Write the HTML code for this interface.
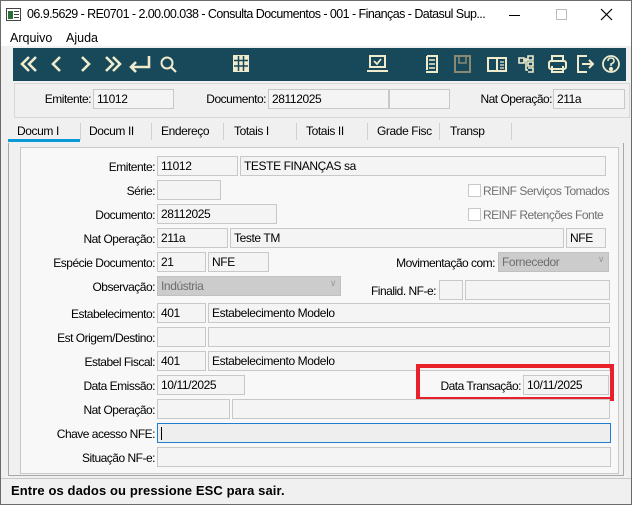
<!DOCTYPE html>
<html><head><meta charset="utf-8"><style>
*{margin:0;padding:0;box-sizing:border-box}
body{width:632px;height:505px;position:relative;background:#f0f0f0;font-family:"Liberation Sans",sans-serif;font-size:12px;color:#000;overflow:hidden}
.a{position:absolute}
.f{position:absolute;height:20px;border:1px solid #c8c8c8;background:#f4f4f4;padding:2px 0 0 3px;white-space:nowrap;letter-spacing:-0.4px}
.l{position:absolute;text-align:right;white-space:nowrap;letter-spacing:-0.5px}
.dis{background:#cccccc;color:#6d6d6d;border-color:#c0c0c0}
.t{position:absolute;top:124px;letter-spacing:-0.4px}
.sep{position:absolute;top:123px;width:1px;height:17px;background:#d0d0d0}
</style></head><body>
<div class="a" style="left:0;top:0;width:632px;height:505px;border:1px solid #6b6b6b;"></div>
<div class="a" style="left:1px;top:1px;width:630px;height:29px;background:#fff"></div>
<svg class="a" style="left:6px;top:8px" width="15" height="13"><rect x="0.5" y="0.5" width="14" height="12" fill="#fff" stroke="#444"/><rect x="2" y="3" width="5" height="8" fill="#2a6e3a"/><rect x="8" y="3" width="5" height="1" fill="#444"/><rect x="8" y="6" width="5" height="1" fill="#444"/><rect x="8" y="9" width="5" height="1" fill="#444"/></svg>
<div class="a" style="left:27px;top:7px;font-size:12.5px;letter-spacing:-0.55px;white-space:nowrap">06.9.5629 - RE0701 - 2.00.00.038 - Consulta Documentos - 001 - Finanças - Datasul Sup...</div>
<div class="a" style="left:509px;top:15px;width:11px;height:1px;background:#000"></div>
<div class="a" style="left:556px;top:9px;width:11px;height:11px;border:1px solid #bbb"></div>
<svg class="a" style="left:600px;top:8px" width="13" height="13"><path d="M1 1L12 12M12 1L1 12" stroke="#000" stroke-width="1.2"/></svg>
<div class="a" style="left:1px;top:30px;width:630px;height:16px;background:#fff"></div>
<div class="a" style="left:10px;top:31px;font-size:12.5px">Arquivo</div>
<div class="a" style="left:66px;top:31px;font-size:12.5px">Ajuda</div>
<div class="a" style="left:13px;top:48px;width:613px;height:33px;background:#17495a"></div>
<svg class="a" style="left:13px;top:48px" width="613" height="33" fill="none" stroke="#f0ebcc" stroke-width="2.6">
<path d="M16 9L9 16L16 23M23 9L16 16L23 23"/>
<path d="M47 9L40 16L47 23"/>
<path d="M69 9L76 16L69 23"/>
<path d="M93 9L100 16L93 23M100 9L107 16L100 23"/>
<path d="M136 8V19H118M123 14L118 19L123 24"/>
<circle cx="154" cy="15" r="5.5" stroke-width="2"/><path d="M158 19L163 24" stroke-width="2.2"/>
<g fill="#f0ebcc" stroke="none"><rect x="220" y="7" width="16" height="17"/></g>
<path d="M221 12.5H235M221 18H235M225.5 8V23M230.5 8V23" stroke="#17495a" stroke-width="1.5"/>
<rect x="357" y="8" width="15" height="11" stroke-width="2"/><path d="M354 23H375" stroke-width="2"/><path d="M361 13L364 16L368 11" stroke-width="1.8"/>
<path d="M414 8H424V24H413M414 8V22" stroke-width="2"/><path d="M416 12H422M416 16H422M416 20H422" stroke-width="1.5"/>
<rect x="442" y="8" width="15" height="16" stroke="#8a8a72" stroke-width="2"/><path d="M446 9V15H453V9" stroke="#8a8a72" stroke-width="1.6"/>
<path d="M475 10H484V23H475ZM484 10H493V23H484" stroke-width="2"/><path d="M487 14H491M487 17H491M487 20H491" stroke-width="1.3"/>
<path d="M506 10H511V15H506ZM515 8H520V12H515ZM515 14H520V18H515ZM515 20H520V24H515M511 12H515M513 10V22H515" stroke-width="1.6"/>
<rect x="536" y="13" width="17" height="8" rx="2" stroke-width="2"/><path d="M539 13V8H550V13M539 18V24H550V18" stroke-width="2"/>
<path d="M574 8H565V24H574M569 16H580M576 12L580 16L576 20" stroke-width="2"/>
<circle cx="598" cy="16" r="8" stroke-width="1.8"/><path d="M595 13Q595 10 598 10Q601 10 601 13Q601 15 598 16V18" stroke-width="1.6"/><circle cx="598" cy="21" r="0.8" fill="#f0ebcc"/>
</svg>
<div class="a" style="left:14px;top:83px;width:616px;height:35px;border:1px solid #d8d8d8"></div>
<div class="l" style="right:541px;top:92px">Emitente:</div><div class="f" style="left:93px;top:89px;width:81px">11012</div>
<div class="l" style="right:366px;top:92px">Documento:</div><div class="f" style="left:268px;top:89px;width:121px">28112025</div><div class="f" style="left:389px;top:89px;width:61px"></div>
<div class="l" style="right:80px;top:92px">Nat Operação:</div><div class="f" style="left:553px;top:89px;width:72px">211a</div>
<div class="t" style="left:17px">Docum I</div><div class="a" style="left:8px;top:139px;width:72px;height:3px;background:#0a9ad8"></div>
<div class="sep" style="left:80px"></div><div class="t" style="left:89px">Docum II</div>
<div class="sep" style="left:151px"></div><div class="t" style="left:161px">Endereço</div>
<div class="sep" style="left:223px"></div><div class="t" style="left:234px">Totais I</div>
<div class="sep" style="left:296px"></div><div class="t" style="left:306px">Totais II</div>
<div class="sep" style="left:367px"></div><div class="t" style="left:377px">Grade Fisc</div>
<div class="sep" style="left:439px"></div><div class="t" style="left:450px">Transp</div>
<div class="sep" style="left:511px"></div>
<div class="a" style="left:8px;top:143px;width:616px;height:333px;border:1px solid #a8a8a8;border-top:none"></div>
<div class="a" style="left:20px;top:147px;width:599px;height:327px;border:1px solid #c8c8c8;background:#f8f8f8"></div>
<div class="l" style="right:477px;top:160px">Emitente:</div><div class="f" style="left:157px;top:156px;width:81px">11012</div><div class="f" style="left:240px;top:156px;width:366px">TESTE FINANÇAS sa</div>
<div class="l" style="right:477px;top:184px">Série:</div><div class="f" style="left:157px;top:180px;width:64px"></div>
<div class="a" style="left:468px;top:184px;width:13px;height:13px;border:1px solid #c8c8c8;background:#fff"></div><div class="a" style="left:483px;top:184px;color:#707070;letter-spacing:-0.5px">REINF Serviços Tomados</div>
<div class="l" style="right:477px;top:208px">Documento:</div><div class="f" style="left:157px;top:204px;width:120px">28112025</div>
<div class="a" style="left:468px;top:208px;width:13px;height:13px;border:1px solid #c8c8c8;background:#fff"></div><div class="a" style="left:483px;top:208px;color:#707070;letter-spacing:-0.5px">REINF Retenções Fonte</div>
<div class="l" style="right:477px;top:232px">Nat Operação:</div><div class="f" style="left:157px;top:228px;width:71px">211a</div><div class="f" style="left:230px;top:228px;width:334px">Teste TM</div><div class="f" style="left:566px;top:228px;width:40px">NFE</div>
<div class="l" style="right:477px;top:256px">Espécie Documento:</div><div class="f" style="left:157px;top:252px;width:49px">21</div><div class="f" style="left:208px;top:252px;width:61px">NFE</div>
<div class="l" style="right:137px;top:256px">Movimentação com:</div><div class="f dis" style="left:498px;top:252px;width:111px">Fornecedor<span style="position:absolute;right:4px;top:1px;font-size:9px;color:#999">&#8744;</span></div>
<div class="l" style="right:477px;top:280px">Observação:</div><div class="f dis" style="left:157px;top:276px;width:184px">Indústria<span style="position:absolute;right:4px;top:1px;font-size:9px;color:#999">&#8744;</span></div>
<div class="l" style="right:196px;top:284px">Finalid. NF-e:</div><div class="f" style="left:439px;top:280px;width:24px"></div><div class="f" style="left:465px;top:280px;width:145px"></div>
<div class="l" style="right:477px;top:307px">Estabelecimento:</div><div class="f" style="left:157px;top:303px;width:49px">401</div><div class="f" style="left:208px;top:303px;width:402px">Estabelecimento Modelo</div>
<div class="l" style="right:477px;top:331px">Est Origem/Destino:</div><div class="f" style="left:157px;top:327px;width:49px"></div><div class="f" style="left:208px;top:327px;width:402px"></div>
<div class="l" style="right:477px;top:355px">Estabel Fiscal:</div><div class="f" style="left:157px;top:351px;width:49px">401</div><div class="f" style="left:208px;top:351px;width:402px">Estabelecimento Modelo</div>
<div class="l" style="right:477px;top:379px">Data Emissão:</div><div class="f" style="left:157px;top:375px;width:88px">10/11/2025</div>
<div class="a" style="left:416px;top:364px;width:198px;height:37px;border:4px solid #e8202a"></div>
<div class="l" style="right:111px;top:379px">Data Transação:</div><div class="f" style="left:523px;top:375px;width:86px">10/11/2025</div>
<div class="l" style="right:477px;top:403px">Nat Operação:</div><div class="f" style="left:157px;top:399px;width:73px"></div><div class="f" style="left:232px;top:399px;width:378px"></div>
<div class="l" style="right:477px;top:427px">Chave acesso NFE:</div><div class="f" style="left:157px;top:423px;width:454px;border-color:#1e7fd0;background:#eeeeee"><span style="display:inline-block;width:1px;height:13px;background:#000;margin-top:1px"></span></div>
<div class="l" style="right:477px;top:451px">Situação NF-e:</div><div class="f" style="left:157px;top:447px;width:454px"></div>
<div class="a" style="left:1px;top:478px;width:630px;height:1px;background:#c8c8c8"></div>
<div class="a" style="left:11px;top:483px;font-size:13px;font-weight:bold;letter-spacing:0.1px;white-space:nowrap">Entre os dados ou pressione ESC para sair.</div>
</body></html>
